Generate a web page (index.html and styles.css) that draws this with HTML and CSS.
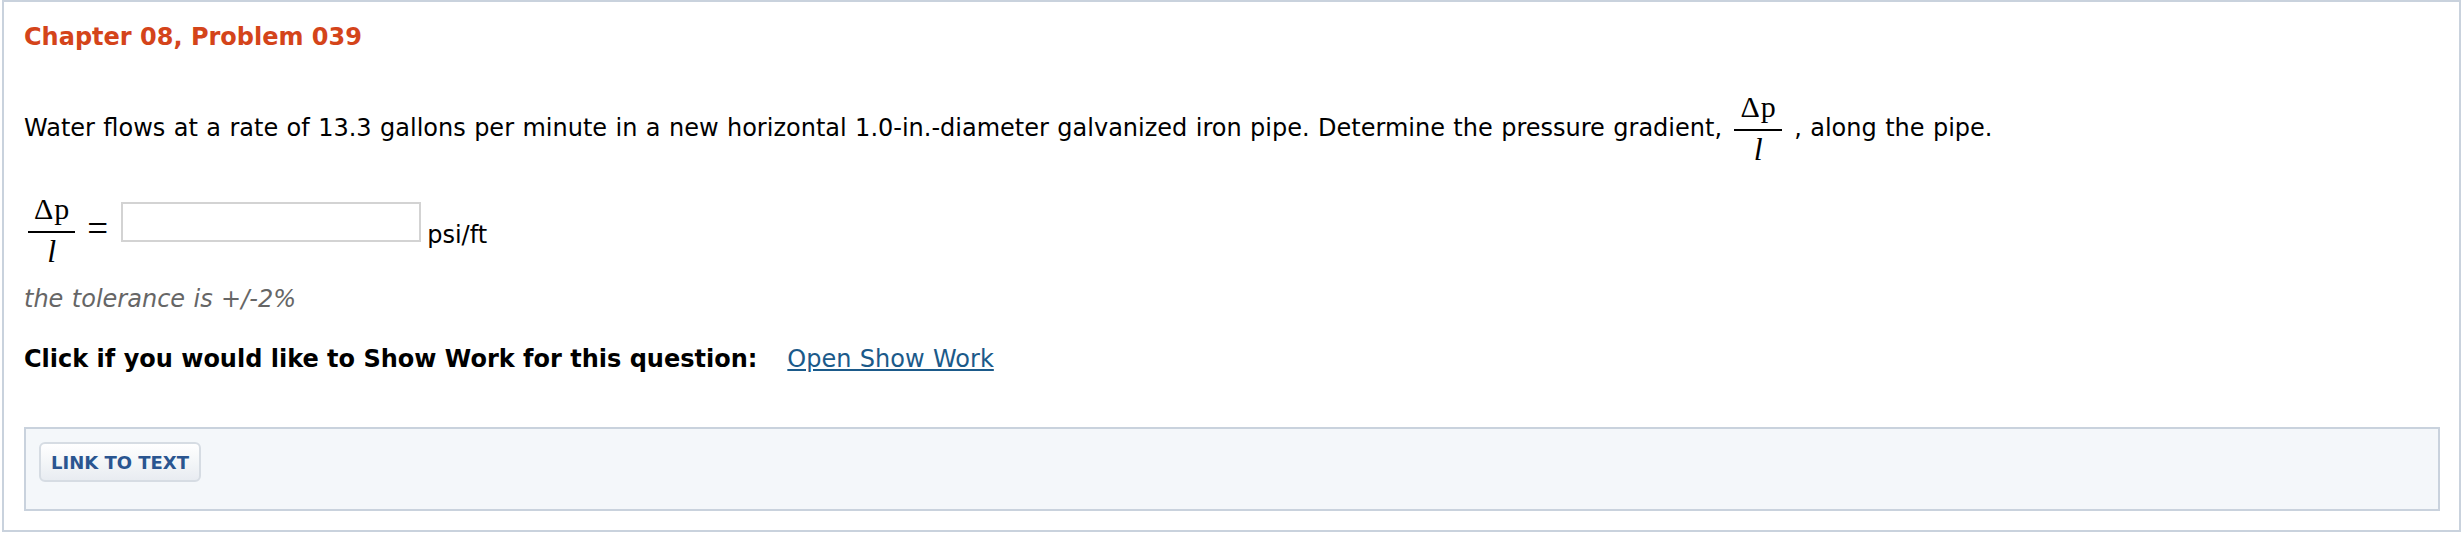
FILE: index.html
```html
<html>
	<head>
		<title>Chapter 08, Problem 039</title>
		<link rel="stylesheet" href="styles.css">
	</head>
	<body>
		<div class="question">
			<h1 class="title">Chapter 08, Problem 039</h1>

			<p class="prompt">Water flows at a rate of 13.3 gallons per minute in a new horizontal 1.0-in.-diameter galvanized iron pipe. Determine the pressure gradient, <span class="frac"><span class="num">&Delta;p</span><span class="den">l</span></span> , along the pipe.</p>

			<div class="answer_row">
				<span class="frac"><span class="num">&Delta;p</span><span class="den">l</span></span>
				<span class="equals">=</span>
				<input type="text" class="answer_box" id="answer1" value="">
				<span class="units">psi/ft</span>
			</div>

			<p class="tolerance">the tolerance is +/-2%</p>

			<p class="show_work"><b>Click if you would like to Show Work for this question:</b><a href="#" class="show_work_link">Open Show Work</a></p>

			<div class="resources">
				<button type="button" class="link_btn">LINK TO TEXT</button>
			</div>
		</div>
	</body>
</html>
```
FILE: styles.css
```css
body {margin:0px;background-color:white;font-family:"DejaVu Sans",Verdana,sans-serif;font-size:24px;color:black}
div.question {margin:0px 1px 0px 2px;border:solid 2px #c9d2dd;padding:0px 19px 19px 20px}
h1.title {margin:21px 0px 0px 0px;font-size:24px;line-height:28px;font-weight:bold;color:#d4441a}
p.prompt {margin:39px 0px 0px 0px;line-height:28px;word-spacing:0.8px}
p.prompt .frac {margin:0px 4px 0px 4px}

.frac {display:inline-block;vertical-align:middle;text-align:center;font-family:"Liberation Serif","Times New Roman",serif;word-spacing:0px}
.frac .num {display:block;font-size:30px;line-height:34px;padding:0px 5px 5px 6px;letter-spacing:1px;border-bottom:solid 2px black}
.frac .den {display:block;font-size:32px;line-height:36px;font-style:italic}

div.answer_row {display:flex;align-items:flex-start;margin:25px 0px 0px 0px}
div.answer_row .frac {margin-left:4px}
span.equals {font-family:"Liberation Serif","Times New Roman",serif;font-size:37px;line-height:40px;margin:17px 13px 0px 12px}
input.answer_box {width:300px;height:40px;box-sizing:border-box;border:solid 2px #d3d3d3;margin:10px 6px 0px 0px;font-size:22px;padding:2px 6px}
span.units {line-height:28px;margin-top:29px;word-spacing:0.8px}

p.tolerance {margin:16px 0px 0px 0px;line-height:28px;font-style:italic;color:#666666;word-spacing:0.8px}
p.show_work {margin:32px 0px 0px 0px;line-height:28px}
a.show_work_link {color:#1b5a8a;margin-left:30px;word-spacing:0.8px}

div.resources {margin:54px 0px 0px 0px;border:solid 2px #c9d2dd;background-color:#f4f7fa;padding:13px 13px 27px 13px}
button.link_btn {display:block;width:162px;height:40px;border:solid 2px #d6dce3;border-radius:6px;background:linear-gradient(#ffffff,#e8ecf1);font-family:"DejaVu Sans",Verdana,sans-serif;font-weight:bold;font-size:18px;color:#2a5590;padding:0px}
```
